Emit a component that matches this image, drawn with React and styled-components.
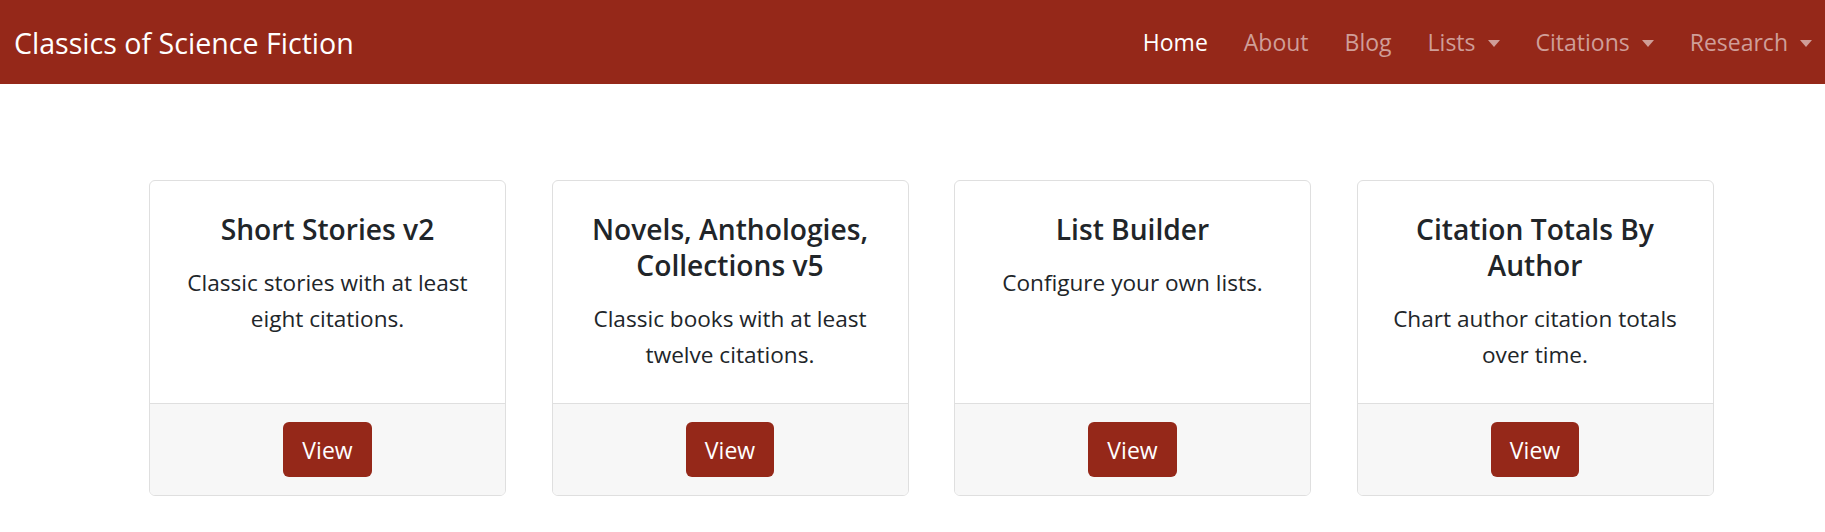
import React from "react";
import styled, { createGlobalStyle } from "styled-components";

const Global = createGlobalStyle`
  html, body { margin: 0; padding: 0; background: #fff; }
  body { font-family: "Open Sans", "Noto Sans", sans-serif; color: #212529; }
  * { box-sizing: border-box; }
`;

const RED = "#952819";

const NavBar = styled.nav`
  height: 84px;
  background: ${RED};
  display: flex;
  align-items: center;
  justify-content: space-between;
  padding: 3px 13px 0 14px;
`;

const Brand = styled.a`
  font-size: 28.6px;
  color: #fff;
  text-decoration: none;
  line-height: 1;
`;

const NavList = styled.ul`
  list-style: none;
  margin: 0;
  padding: 0;
  display: flex;
  align-items: center;
  gap: 36px;
`;

const NavLink = styled.a`
  font-size: 23px;
  color: ${(p) => (p.$active ? "#ffffff" : "#cf9e98")};
  text-decoration: none;
  display: inline-flex;
  align-items: center;
  line-height: 1;
`;

const Caret = styled.span`
  display: inline-block;
  margin-left: 12px;
  width: 0;
  height: 0;
  border-top: 7px solid currentColor;
  border-left: 6px solid transparent;
  border-right: 6px solid transparent;
  margin-top: 2px;
`;

const Main = styled.main`
  padding: 96px 0 0 149px;
`;

const CardGrid = styled.div`
  display: grid;
  grid-template-columns: repeat(4, 357px);
  column-gap: 45.5px;
`;

const Card = styled.div`
  display: flex;
  flex-direction: column;
  border: 1.5px solid #dfdfdf;
  border-radius: 6px;
  overflow: hidden;
  background: #fff;
  height: 316px;
`;

const CardBody = styled.div`
  flex: 1;
  padding: 30px 24px 0;
  text-align: center;
`;

const CardTitle = styled.h5`
  margin: 0 0 18px;
  font-size: 28.2px;
  font-weight: 600;
  line-height: 36px;
  color: #212529;
`;

const CardText = styled.p`
  margin: 0;
  font-size: 22.6px;
  line-height: 36px;
  color: #212529;
`;

const CardFooter = styled.div`
  background: #f7f7f7;
  border-top: 1.5px solid #dfdfdf;
  padding: 18px 24px;
  display: flex;
  justify-content: center;
`;

const ViewButton = styled.a`
  display: inline-flex;
  align-items: center;
  justify-content: center;
  height: 55px;
  padding: 0 19px;
  border-radius: 6px;
  background: ${RED};
  color: #fff;
  font-size: 23px;
  text-decoration: none;
`;

const cards = [
  { title: "Short Stories v2", text: "Classic stories with at least eight citations." },
  { title: "Novels, Anthologies, Collections v5", text: "Classic books with at least twelve citations." },
  { title: "List Builder", text: "Configure your own lists." },
  { title: "Citation Totals By Author", text: "Chart author citation totals over time." },
];

const links = [
  { label: "Home", active: true },
  { label: "About" },
  { label: "Blog" },
  { label: "Lists", drop: true },
  { label: "Citations", drop: true },
  { label: "Research", drop: true },
];

export default function App() {
  return (
    <>
      <Global />
      <NavBar>
        <Brand href="#">Classics of Science Fiction</Brand>
        <NavList>
          {links.map((l) => (
            <li key={l.label}>
              <NavLink href="#" $active={l.active}>
                {l.label}
                {l.drop && <Caret />}
              </NavLink>
            </li>
          ))}
        </NavList>
      </NavBar>
      <Main>
        <CardGrid>
          {cards.map((c) => (
            <Card key={c.title}>
              <CardBody>
                <CardTitle>{c.title}</CardTitle>
                <CardText>{c.text}</CardText>
              </CardBody>
              <CardFooter>
                <ViewButton href="#">View</ViewButton>
              </CardFooter>
            </Card>
          ))}
        </CardGrid>
      </Main>
    </>
  );
}
